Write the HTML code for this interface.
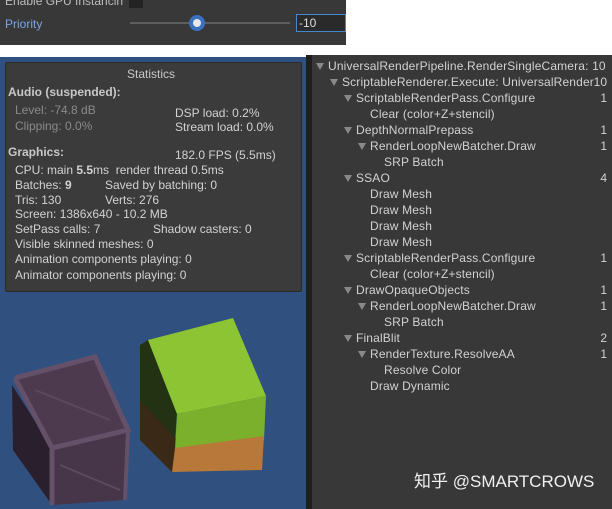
<!DOCTYPE html>
<html><head><meta charset="utf-8"><style>
*{margin:0;padding:0;box-sizing:border-box}
body{width:612px;height:509px;background:#fff;position:relative;overflow:hidden;font-family:"Liberation Sans","Noto Sans CJK SC",sans-serif;font-size:12px;color:#d2d2d2}
.a{position:absolute;white-space:nowrap;line-height:14px}
.tri{position:absolute;width:0;height:0;border-left:4px solid transparent;border-right:4px solid transparent;border-top:7px solid #8a8a8a}
.n{position:absolute;right:5px;line-height:14px}
.r .a{letter-spacing:0.15px}
</style></head><body>
<div class="a" style="left:0;top:0;width:346px;height:45px;background:#383838"></div>
<div class="a" style="left:5px;top:-6px;color:#bdbdbd">Enable GPU Instancin</div>
<div class="a" style="left:129px;top:-4px;width:14px;height:12px;background:#232323"></div>
<div class="a" style="left:5px;top:17px;color:#7aa5e0">Priority</div>
<div class="a" style="left:130px;top:22px;width:160px;height:2px;background:#5e5e5e"></div>
<div class="a" style="left:189px;top:15px;width:16px;height:16px;border-radius:50%;background:#3a72c0"></div>
<div class="a" style="left:193px;top:19px;width:8px;height:8px;border-radius:50%;background:#e8e8e8"></div>
<div class="a" style="left:296px;top:14px;width:50px;height:18px;border:1px solid #4a86d0;background:#2a2a2a;color:#ddd;padding-left:2px;line-height:16px">-10</div>

<div class="a" style="left:0;top:57px;width:308px;height:452px;background:#30507f"></div>
<div class="a" style="left:306px;top:55px;width:6px;height:454px;background:#1f1f1f"></div>
<svg class="a" style="left:0;top:290px" width="308" height="219">
<polygon points="12,95 52,158 52,215 13,160" fill="#2a1f2c"/>
<polygon points="15,88 95,67 128,140 52,158" fill="#4d3a4f"/>
<polygon points="52,158 128,140 125,210 52,215" fill="#473549"/>
<polyline points="15,88 95,67 128,140 52,158 15,88" fill="none" stroke="#65506a" stroke-width="5"/>
<line x1="52" y1="158" x2="52" y2="215" stroke="#65506a" stroke-width="5"/>
<line x1="128" y1="140" x2="125" y2="210" stroke="#65506a" stroke-width="4"/>
<line x1="35" y1="100" x2="110" y2="130" stroke="#5c4860" stroke-width="2"/>
<line x1="60" y1="175" x2="120" y2="200" stroke="#5c4860" stroke-width="2"/>
<polygon points="140,55 148,50 177,124 172,182 140,150" fill="#223212"/>
<polygon points="140,110 177,150 172,182 140,150" fill="#3a2916"/>
<polygon points="148,50 233,28 266,106 177,124" fill="#8cc433"/>
<polygon points="177,124 266,106 264,150 175,160" fill="#7ab02c"/>
<polygon points="175,158 264,146 262,180 172,182" fill="#b8783a"/>
</svg>
<div class="a" style="left:5px;top:62px;width:297px;height:230px;background:#3b3b3b;border:1px solid #2a2a2a;border-radius:2px"></div>
<div class="a" style="left:127px;top:67px;color:#c8c8c8">Statistics</div>
<div class="a" style="left:8px;top:85px;font-weight:bold;color:#c8c8c8">Audio (suspended):</div>
<div class="a" style="left:15px;top:103px;color:#8a8a8a">Level: -74.8 dB</div>
<div class="a" style="left:15px;top:119px;color:#8a8a8a">Clipping: 0.0%</div>
<div class="a" style="left:175px;top:106px">DSP load: 0.2%</div>
<div class="a" style="left:175px;top:120px">Stream load: 0.0%</div>
<div class="a" style="left:8px;top:145px;font-weight:bold;color:#c8c8c8">Graphics:</div>
<div class="a" style="left:175px;top:148px">182.0 FPS (5.5ms)</div>
<div class="a" style="left:15px;top:163px">CPU: main <b>5.5</b>ms&nbsp; render thread 0.5ms</div>
<div class="a" style="left:15px;top:178px">Batches: <b>9</b></div>
<div class="a" style="left:105px;top:178px">Saved by batching: 0</div>
<div class="a" style="left:15px;top:193px">Tris: 130</div>
<div class="a" style="left:105px;top:193px">Verts: 276</div>
<div class="a" style="left:15px;top:207px">Screen: 1386x640 - 10.2 MB</div>
<div class="a" style="left:15px;top:222px">SetPass calls: 7</div>
<div class="a" style="left:153px;top:222px">Shadow casters: 0</div>
<div class="a" style="left:15px;top:237px">Visible skinned meshes: 0</div>
<div class="a" style="left:15px;top:252px">Animation components playing: 0</div>
<div class="a" style="left:15px;top:268px">Animator components playing: 0</div>

<div class="a r" style="left:312px;top:55px;width:300px;height:454px;background:#383838;font-size:12px">
<div class="tri" style="left:4px;top:8px"></div><div class="a" style="left:16px;top:4px">UniversalRenderPipeline.RenderSingleCamera: 10</div>
<div class="tri" style="left:18px;top:24px"></div><div class="a" style="left:30px;top:20px;width:252px;overflow:hidden">ScriptableRenderer.Execute: UniversalRenderer</div><div class="n" style="top:20px">10</div>
<div class="tri" style="left:32px;top:40px"></div><div class="a" style="left:44px;top:36px">ScriptableRenderPass.Configure</div><div class="n" style="top:36px">1</div>
<div class="a" style="left:58px;top:52px">Clear (color+Z+stencil)</div>
<div class="tri" style="left:32px;top:72px"></div><div class="a" style="left:44px;top:68px">DepthNormalPrepass</div><div class="n" style="top:68px">1</div>
<div class="tri" style="left:46px;top:88px"></div><div class="a" style="left:58px;top:84px">RenderLoopNewBatcher.Draw</div><div class="n" style="top:84px">1</div>
<div class="a" style="left:72px;top:100px">SRP Batch</div>
<div class="tri" style="left:32px;top:120px"></div><div class="a" style="left:44px;top:116px">SSAO</div><div class="n" style="top:116px">4</div>
<div class="a" style="left:58px;top:132px">Draw Mesh</div>
<div class="a" style="left:58px;top:148px">Draw Mesh</div>
<div class="a" style="left:58px;top:164px">Draw Mesh</div>
<div class="a" style="left:58px;top:180px">Draw Mesh</div>
<div class="tri" style="left:32px;top:200px"></div><div class="a" style="left:44px;top:196px">ScriptableRenderPass.Configure</div><div class="n" style="top:196px">1</div>
<div class="a" style="left:58px;top:212px">Clear (color+Z+stencil)</div>
<div class="tri" style="left:32px;top:232px"></div><div class="a" style="left:44px;top:228px">DrawOpaqueObjects</div><div class="n" style="top:228px">1</div>
<div class="tri" style="left:46px;top:248px"></div><div class="a" style="left:58px;top:244px">RenderLoopNewBatcher.Draw</div><div class="n" style="top:244px">1</div>
<div class="a" style="left:72px;top:260px">SRP Batch</div>
<div class="tri" style="left:32px;top:280px"></div><div class="a" style="left:44px;top:276px">FinalBlit</div><div class="n" style="top:276px">2</div>
<div class="tri" style="left:46px;top:296px"></div><div class="a" style="left:58px;top:292px">RenderTexture.ResolveAA</div><div class="n" style="top:292px">1</div>
<div class="a" style="left:72px;top:308px">Resolve Color</div>
<div class="a" style="left:58px;top:324px">Draw Dynamic</div>
<div class="a" style="left:102px;top:415px;font-size:17px;line-height:24px;color:#f0f0f0;letter-spacing:0">知乎 @SMARTCROWS</div>
</div>
</body></html>
